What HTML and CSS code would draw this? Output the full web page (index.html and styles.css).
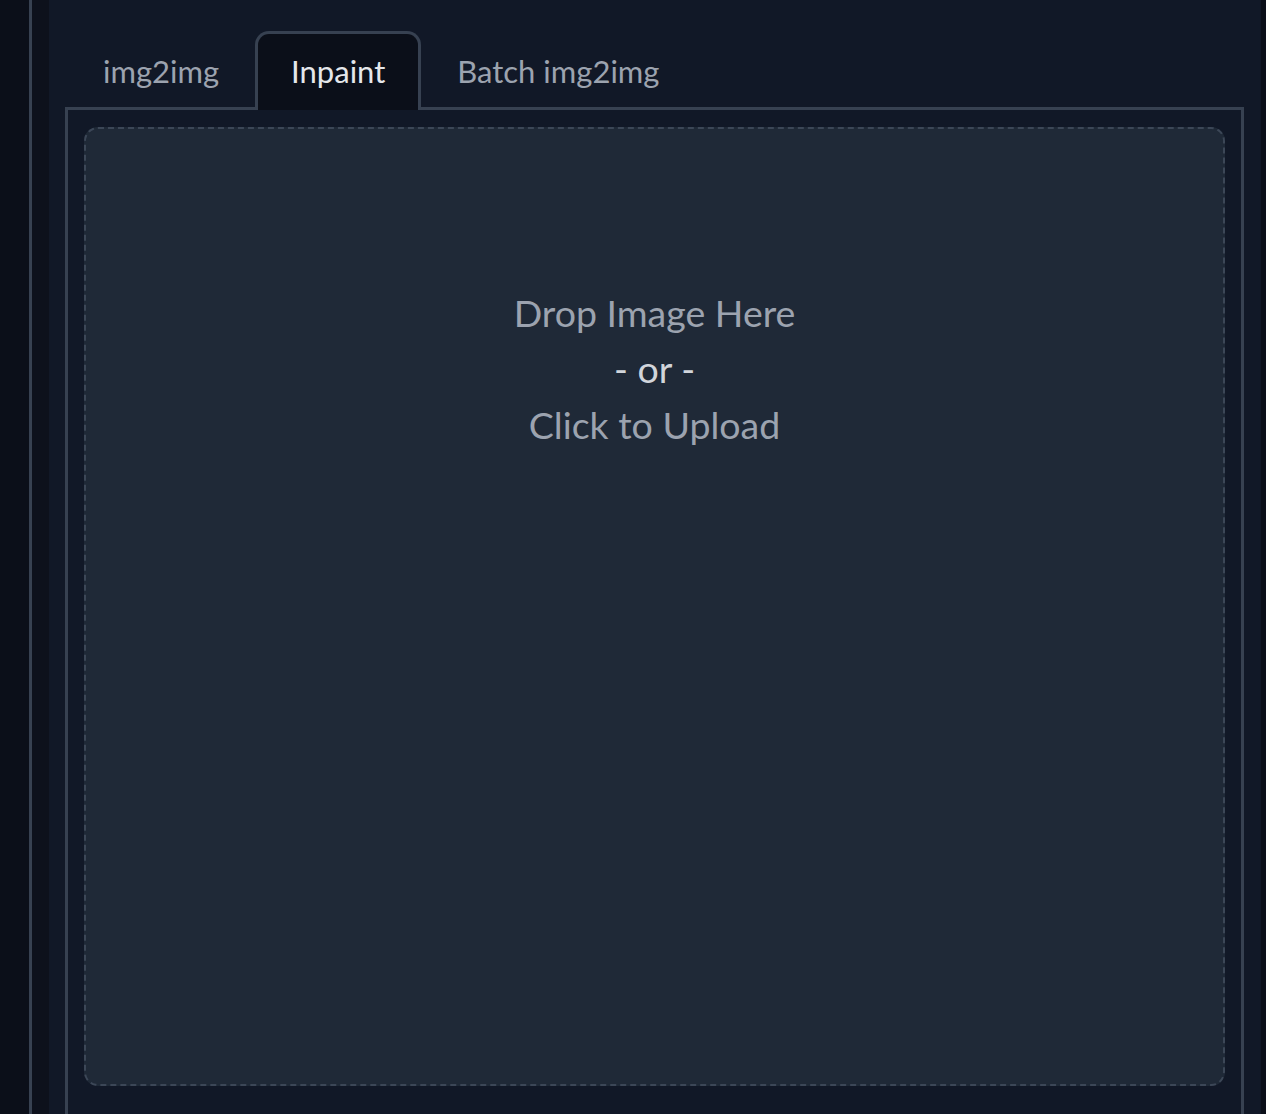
FILE: index.html
```html
<!DOCTYPE html>
<html lang="en">
<head>
<meta charset="utf-8">
<title>img2img</title>
<link rel="stylesheet" href="styles.css">
</head>
<body>
<div class="shell">
  <div class="rail"></div>
  <div class="gutter"></div>
  <main class="main">
    <div class="tabs">
      <div class="tab-nav">
        <button class="tab">img2img</button>
        <button class="tab selected">Inpaint</button>
        <button class="tab">Batch img2img</button>
      </div>
      <div class="tab-panel">
        <div class="dropzone">
          <div class="drop-text">
            <span class="line">Drop Image Here</span>
            <span class="line or">- or -</span>
            <span class="line">Click to Upload</span>
          </div>
        </div>
      </div>
    </div>
  </main>
  <div class="edge"></div>
</div>
</body>
</html>
```
FILE: styles.css
```css
html, body {
  margin: 0;
  padding: 0;
  height: 100%;
  background: #0b0f19;
  overflow: hidden;
}
body {
  font-family: "Lato", "Noto Sans", sans-serif;
}
.shell {
  display: flex;
  height: 1114px;
}
.rail {
  width: 29px;
  flex: none;
  background: #0b0f19;
  border-right: 3px solid #374151;
}
.gutter {
  width: 17px;
  flex: none;
  background: #0d111c;
}
.main {
  flex: 1;
  background: #111827;
  padding: 31px 17px 0 16px;
  min-width: 0;
}
.edge {
  width: 5px;
  flex: none;
  background: #0b0f19;
}
.tabs {
  display: flex;
  flex-direction: column;
  height: 100%;
}
.tab-nav {
  display: flex;
  gap: 0;
  padding-left: 2px;
  position: relative;
  z-index: 1;
  margin-bottom: -3px;
}
.tab {
  font-family: inherit;
  font-size: 31px;
  color: #9ca3af;
  background: transparent;
  border: 3px solid transparent;
  border-bottom: none;
  border-radius: 14px 14px 0 0;
  height: 79px;
  padding: 0 33px 2px;
  cursor: pointer;
}
.tab.selected {
  color: #e5e7eb;
  background: #0b0f19;
  border-color: #374151;
}
.tab-panel {
  flex: 1;
  border: 3px solid #374151;
  border-bottom: none;
  padding: 17px 16px 0;
  display: flex;
  flex-direction: column;
}
.dropzone {
  height: 959px;
  background: #1f2937;
  border: 2px dashed #3c4757;
  border-radius: 14px;
  box-sizing: border-box;
  display: flex;
  justify-content: center;
  padding-top: 156px;
}
.drop-text {
  display: flex;
  flex-direction: column;
  align-items: center;
  font-size: 37.5px;
  line-height: 56px;
  color: #9ca3af;
}
.drop-text .or {
  color: #d1d5db;
}
```
